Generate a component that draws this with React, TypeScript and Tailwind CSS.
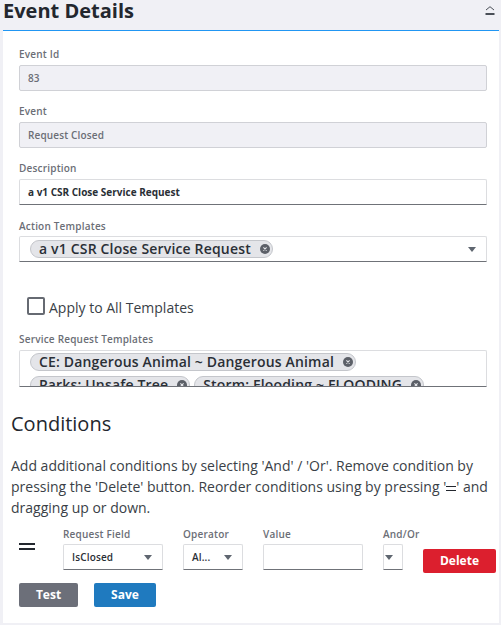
const font = "font-['Open_Sans',sans-serif]"

function Caret() {
  return (
    <svg width="8" height="5" viewBox="0 0 8 5" className="shrink-0">
      <path d="M0 0h8L4 5z" fill="#5f6670" />
    </svg>
  )
}

function Chip({ label }: { label: string }) {
  return (
    <span className="inline-flex h-[18px] shrink-0 items-center rounded-full border border-[#c4c6cb] bg-[#e4e5e9] pl-[8px] pr-[2px] text-[14px] font-semibold leading-none tracking-[0.17px] text-[#2a2f36]">
      {label}
      <span className="ml-[9px] flex h-[10px] w-[10px] items-center justify-center rounded-full bg-[#5c6068]">
        <svg width="6" height="6" viewBox="0 0 6 6">
          <path d="M1.4 1.4l3.2 3.2M4.6 1.4L1.4 4.6" stroke="#e4e5e9" strokeWidth="1.1" />
        </svg>
      </span>
    </span>
  )
}

function Label({ children }: { children: React.ReactNode }) {
  return <label className="block text-[10px] font-semibold leading-[14px] tracking-[0.2px] text-[#6b6e76]">{children}</label>
}

function ReadOnlyField({ label, value }: { label: string; value: string }) {
  return (
    <div className="mb-[13px]">
      <Label>{label}</Label>
      <div className="mt-[4px] flex h-[26px] items-center rounded-[2px] border border-[#d0d1d6] bg-[#f0f0f5] px-2 pt-[1px] text-[10px] font-semibold tracking-[0.15px] text-[#6b6e76]">
        {value}
      </div>
    </div>
  )
}

function SmallSelect({ value }: { value: string }) {
  return (
    <div className="flex h-[26px] items-center justify-between rounded-t-[2px] border border-[#dcdde0] border-b-[#6f7278] bg-white pl-2 pr-[10px] text-[10px] font-semibold tracking-[0.15px] text-[#2a2f36]">
      <span>{value}</span>
      <Caret />
    </div>
  )
}

export default function App() {
  return (
    <div className={`h-[625px] w-[501px] overflow-hidden bg-[#f0f0f5] ${font}`}>
      <div className="ml-[3px] mr-[2px] flex h-[31px] items-start justify-between border-b border-[#2196f3] pr-[4px]">
        <h1 className="text-[20px] font-bold leading-[22px] text-[#23272e]">Event Details</h1>
        <svg width="10" height="10" viewBox="0 0 10 10" className="mt-[6px]">
          <path d="M1 4L5 .7l4 3.3" fill="none" stroke="#4a4f57" strokeWidth="1" />
          <path d="M.5 8h9" stroke="#4a4f57" strokeWidth="2" />
        </svg>
      </div>
      <div className="ml-[3px] mr-[2px] h-[592px] bg-white pt-[16px]">
        <div className="ml-[16px] mr-[12px]">
          <ReadOnlyField label="Event Id" value="83" />
          <ReadOnlyField label="Event" value="Request Closed" />
          <div className="mb-[14px]">
            <Label>Description</Label>
            <div className="mt-[4px] flex h-[26px] items-center rounded-t-[2px] border border-[#dcdde0] border-b-[#6f7278] bg-white px-2 pt-[1px] text-[10px] font-bold text-[#2a2f36]">
              a v1 CSR Close Service Request
            </div>
          </div>
          <Label>Action Templates</Label>
          <div className="mt-[3px] flex h-[26px] items-center justify-between rounded-t-[2px] border border-[#dcdde0] border-b-[#6f7278] bg-white px-[10px]">
            <Chip label="a v1 CSR Close Service Request" />
            <Caret />
          </div>
          <label className="ml-[8px] mt-[35px] flex h-[18px] items-center gap-[4px] text-[14px] text-[#3a3f47]">
            <span className="h-[18px] w-[18px] rounded-[2px] border-2 border-[#666a72] bg-white" />
            <span className="pt-[2px]">Apply to All Templates</span>
          </label>
          <div className="mt-[17px]">
            <Label>Service Request Templates</Label>
          </div>
          <div className="mt-[4px] h-[37px] overflow-hidden rounded-t-[2px] border border-[#dcdde0] border-b-[#6f7278] bg-white pl-[10px] pt-[2px]">
            <div className="flex">
              <Chip label="CE: Dangerous Animal ~ Dangerous Animal" />
            </div>
            <div className="mt-[5px] flex gap-[4px]">
              <Chip label="Parks: Unsafe Tree" />
              <Chip label="Storm: Flooding ~ FLOODING" />
            </div>
          </div>
        </div>
        <div className="ml-[8px] mr-[2px] mt-[23px]">
          <h2 className="text-[20px] leading-[28px] text-[#23272e]">Conditions</h2>
          <p className="mt-[17px] text-[14px] leading-[21px] text-[#3a3f47]">
            Add additional conditions by selecting 'And' / 'Or'. Remove condition by pressing the 'Delete' button. Reorder conditions using by pressing '
            <span className="inline-block h-[5px] w-[10px] border-y-[1.5px] border-[#23272e] align-middle" />
            ' and dragging up or down.
          </p>
          <div className="mt-[9px] flex items-start">
            <div className="ml-[8px] mt-[16px] h-[7px] w-[16px] border-y-2 border-[#23272e]" />
            <div className="ml-[28px] w-[100px]">
              <Label>Request Field</Label>
              <div className="mt-[3px]"><SmallSelect value="IsClosed" /></div>
            </div>
            <div className="ml-[20px] w-[60px]">
              <Label>Operator</Label>
              <div className="mt-[3px]"><SmallSelect value="Al..." /></div>
            </div>
            <div className="ml-[20px] w-[100px]">
              <Label>Value</Label>
              <div className="mt-[3px] h-[26px] rounded-t-[2px] border border-[#dcdde0] border-b-[#6f7278] bg-white" />
            </div>
            <div className="ml-[20px] w-[20px]">
              <Label>And/Or</Label>
              <div className="mt-[3px] flex h-[26px] items-center rounded-t-[2px] border border-[#dcdde0] border-b-[#6f7278] bg-white pl-[1px]"><Caret /></div>
            </div>
            <button className="ml-[20px] mt-[22px] h-[24px] w-[73px] rounded-[2px] bg-[#dc1f2e] text-[12px] font-bold text-white">Delete</button>
          </div>
          <div className="ml-[8px] mt-[10px] flex gap-[16px]">
            <button className="h-[24px] w-[59px] rounded-[2px] bg-[#6c6f79] text-[12px] font-bold text-white">Test</button>
            <button className="h-[24px] w-[62px] rounded-[2px] bg-[#1f7abf] text-[12px] font-bold text-white">Save</button>
          </div>
        </div>
      </div>
    </div>
  )
}
